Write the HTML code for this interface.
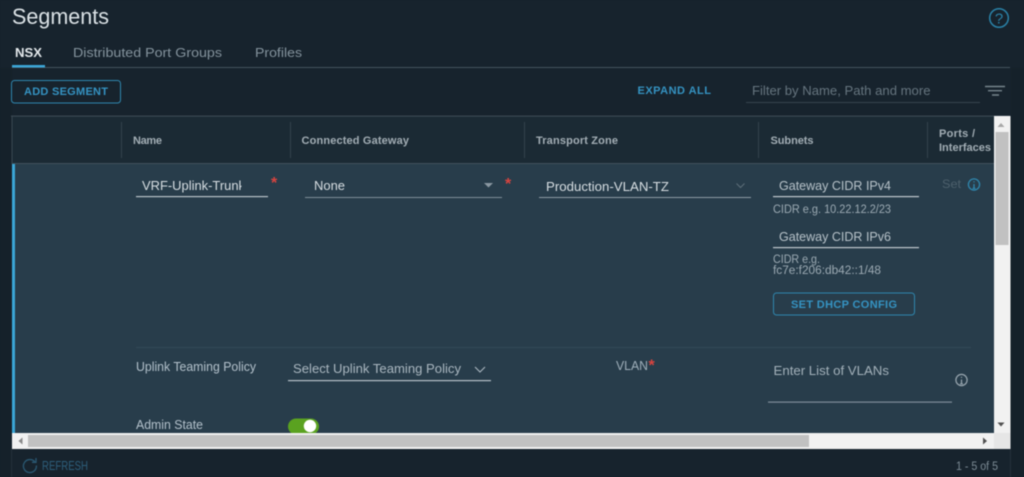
<!DOCTYPE html>
<html><head><meta charset="utf-8"><title>Segments</title>
<style>
html,body{margin:0;padding:0;background:#17232d;width:1024px;height:477px;overflow:hidden}
svg{display:block;filter:blur(.4px)}
text{font-family:"Liberation Sans",sans-serif;font-size:13px}
.h{font-size:11px;font-weight:bold;fill:#a3aeb5}
.b{font-size:11px;font-weight:bold;fill:#3593c2}
.s{font-size:11.5px;fill:#9caab3}
.r{font-size:16px;font-weight:bold;fill:#d9443f}
</style></head><body>
<svg width="1024" height="477" viewBox="0 0 1024 477" xmlns="http://www.w3.org/2000/svg">
<defs><clipPath id="c"><rect x="140" y="175" width="101.5" height="20"/></clipPath></defs>
<rect width="1024" height="477" fill="#17232d"/>
<rect x="0" y="68" width="12" height="409" fill="#15212a"/>
<rect x="1011" y="68" width="13" height="409" fill="#15212a"/>

<text x="12" y="24" style="font-size:22px" fill="#dbe2e6" textLength="97" lengthAdjust="spacingAndGlyphs">Segments</text>
<circle cx="999" cy="18" r="9.3" fill="none" stroke="#2a82a8" stroke-width="1.5"/>
<text x="999" y="23.5" text-anchor="middle" style="font-size:15px" fill="#2a82a8">?</text>

<text x="15" y="57" style="font-size:13px;font-weight:bold" fill="#e4e9ec" textLength="27" lengthAdjust="spacingAndGlyphs">NSX</text>
<text x="73" y="57" fill="#84939d" textLength="149" lengthAdjust="spacingAndGlyphs">Distributed Port Groups</text>
<text x="255" y="57" fill="#84939d" textLength="47" lengthAdjust="spacingAndGlyphs">Profiles</text>
<rect x="12" y="67" width="998" height="1" fill="#44535d"/>
<rect x="12" y="65" width="33" height="2.5" fill="#3ba6d6"/>

<rect x="11.5" y="80.5" width="109" height="22.5" rx="3" fill="none" stroke="#2f86ad"/>
<text x="24" y="95" class="b" textLength="84" lengthAdjust="spacing">ADD SEGMENT</text>
<text x="637.5" y="94" class="b" textLength="73.5" lengthAdjust="spacing">EXPAND ALL</text>
<text x="752" y="95" fill="#66757f" textLength="178.5" lengthAdjust="spacingAndGlyphs">Filter by Name, Path and more</text>
<rect x="746" y="102" width="234" height="1" fill="#36444e"/>
<path d="M985 86.5h20M988 90.7h14M992 95h7" stroke="#76848c" stroke-width="1.4" fill="none"/>

<!-- table header -->
<rect x="12" y="116" width="982" height="48" fill="#1b2a34"/>
<rect x="11" y="115.5" width="999" height="1.2" fill="#3a4852"/>
<rect x="11.5" y="116" width="1" height="48" fill="#3a4852"/>
<rect x="12" y="163" width="982" height="1.2" fill="#40515c"/>
<path d="M121.5 122v36M290.5 122v36M524.5 122v36M758.5 122v36M927.5 122v36" stroke="#33424c" fill="none"/>
<text x="133" y="144" class="h" textLength="29" lengthAdjust="spacing">Name</text>
<text x="301.5" y="144" class="h" textLength="107.5" lengthAdjust="spacing">Connected Gateway</text>
<text x="536" y="144" class="h" textLength="82" lengthAdjust="spacing">Transport Zone</text>
<text x="770.5" y="144" class="h" textLength="43" lengthAdjust="spacing">Subnets</text>
<text x="939" y="137" class="h" textLength="36" lengthAdjust="spacing">Ports /</text>
<text x="939" y="151" class="h" textLength="52" lengthAdjust="spacing">Interfaces</text>

<!-- row -->
<rect x="12" y="164" width="982" height="269" fill="#283d4b"/>
<rect x="12" y="164" width="3" height="269" fill="#3ba6d6"/>

<g clip-path="url(#c)"><text x="142" y="190" fill="#d8dfe3" textLength="103" lengthAdjust="spacingAndGlyphs">VRF-Uplink-Trunk</text></g>
<rect x="136" y="196" width="132" height="1.2" fill="#b8c2c8"/>
<text x="271" y="188" class="r">*</text>

<text x="314" y="190" fill="#d8dfe3" textLength="31" lengthAdjust="spacingAndGlyphs">None</text>
<rect x="305" y="197" width="197" height="1" fill="#7e8e99"/>
<path d="M484 183h9l-4.5 4.5z" fill="#8a98a2"/>
<text x="505" y="189" class="r">*</text>

<text x="546" y="191" fill="#d8dfe3" textLength="123" lengthAdjust="spacingAndGlyphs">Production-VLAN-TZ</text>
<rect x="539" y="197" width="212" height="1" fill="#8d9ba4"/>
<path d="M736.5 183.5l4 4 4-4" stroke="#5d6f7a" fill="none"/>

<text x="779" y="190" fill="#b7c2c9" textLength="112" lengthAdjust="spacingAndGlyphs">Gateway CIDR IPv4</text>
<rect x="773" y="196" width="146" height="1.2" fill="#c0c9ce"/>
<text x="773" y="213" class="s" textLength="118" lengthAdjust="spacingAndGlyphs">CIDR e.g. 10.22.12.2/23</text>
<text x="779" y="241" fill="#b7c2c9" textLength="112" lengthAdjust="spacingAndGlyphs">Gateway CIDR IPv6</text>
<rect x="773" y="247" width="146" height="1.2" fill="#c0c9ce"/>
<text x="773" y="263" class="s" textLength="47" lengthAdjust="spacingAndGlyphs">CIDR e.g.</text>
<text x="773" y="274" class="s" textLength="108" lengthAdjust="spacingAndGlyphs">fc7e:f206:db42::1/48</text>
<rect x="773.5" y="293" width="141" height="22" rx="3" fill="none" stroke="#2f86ad"/>
<text x="791" y="308" class="b" textLength="106" lengthAdjust="spacing">SET DHCP CONFIG</text>

<text x="942" y="188" style="font-size:12px" fill="#4d606c" textLength="19" lengthAdjust="spacingAndGlyphs">Set</text>
<circle cx="974" cy="184.5" r="5.6" fill="none" stroke="#2f86ad" stroke-width="1.3"/>
<path d="M974 184v4M972.6 188.4h2.8M974 181.2v1.2" stroke="#2f86ad" stroke-width="1.3" fill="none"/>

<rect x="136" y="347" width="835" height="1" fill="#334957"/>
<text x="136" y="371" style="font-size:12.5px" fill="#b3c1cb" textLength="120" lengthAdjust="spacingAndGlyphs">Uplink Teaming Policy</text>
<text x="293" y="373" fill="#aab7c0" textLength="168" lengthAdjust="spacingAndGlyphs">Select Uplink Teaming Policy</text>
<rect x="288" y="380" width="203" height="1.2" fill="#b5c0c7"/>
<path d="M475 367l5 5 5-5" stroke="#aab7c0" stroke-width="1.1" fill="none"/>

<text x="616" y="370" fill="#9fafba" textLength="32" lengthAdjust="spacingAndGlyphs">VLAN</text>
<text x="648.5" y="370.5" class="r">*</text>
<text x="773.5" y="375" fill="#a3b1ba" textLength="115.5" lengthAdjust="spacingAndGlyphs">Enter List of VLANs</text>
<rect x="768" y="401.5" width="184" height="1.2" fill="#7e8d98"/>
<circle cx="961.5" cy="380" r="5.6" fill="none" stroke="#9aa8b1" stroke-width="1.2"/>
<path d="M961.5 379.5v4M960.1 383.8h2.8M961.5 376.7v1.2" stroke="#9aa8b1" stroke-width="1.2" fill="none"/>

<text x="136" y="429" style="font-size:12.5px" fill="#b3c1cb" textLength="67" lengthAdjust="spacingAndGlyphs">Admin State</text>
<rect x="288" y="418.5" width="31" height="16" rx="8" fill="#5aa220"/>
<circle cx="310" cy="426" r="6.2" fill="#fff"/>

<!-- scrollbars -->
<rect x="994" y="116" width="16.5" height="317" fill="#f1f1f1"/>
<rect x="995.5" y="132" width="13" height="113" fill="#c1c1c1"/>
<path d="M997.5 127h7l-3.5-4z" fill="#a8a8a8"/>
<path d="M997.5 422.5h7l-3.5 4z" fill="#505050"/>
<rect x="12" y="433" width="998.5" height="16" fill="#f1f1f1"/>
<rect x="28" y="435" width="781" height="12" fill="#c1c1c1"/>
<path d="M22.5 437.5v7l-4-3.5z" fill="#8a8a8a"/>
<path d="M983 437.5v7l4-3.5z" fill="#505050"/>
<rect x="994" y="433" width="16.5" height="16" fill="#e6e6e6"/>

<!-- footer -->
<rect x="11" y="449" width="1" height="28" fill="#232f39"/>
<rect x="1010" y="449" width="1" height="28" fill="#232f39"/>
<path d="M35 462a6.5 6.5 0 1 0 1.4 3.5" stroke="#2a5872" stroke-width="1.3" fill="none"/>
<path d="M32 462.3h4v-4.3" stroke="#2a5872" stroke-width="1.3" fill="none"/>
<text x="42" y="470" style="font-size:12.5px" fill="#2d5e7b" textLength="46" lengthAdjust="spacingAndGlyphs">REFRESH</text>
<text x="956" y="470" style="font-size:11.5px" fill="#7c8b95" textLength="42" lengthAdjust="spacingAndGlyphs">1 - 5 of 5</text>
</svg>
</body></html>
